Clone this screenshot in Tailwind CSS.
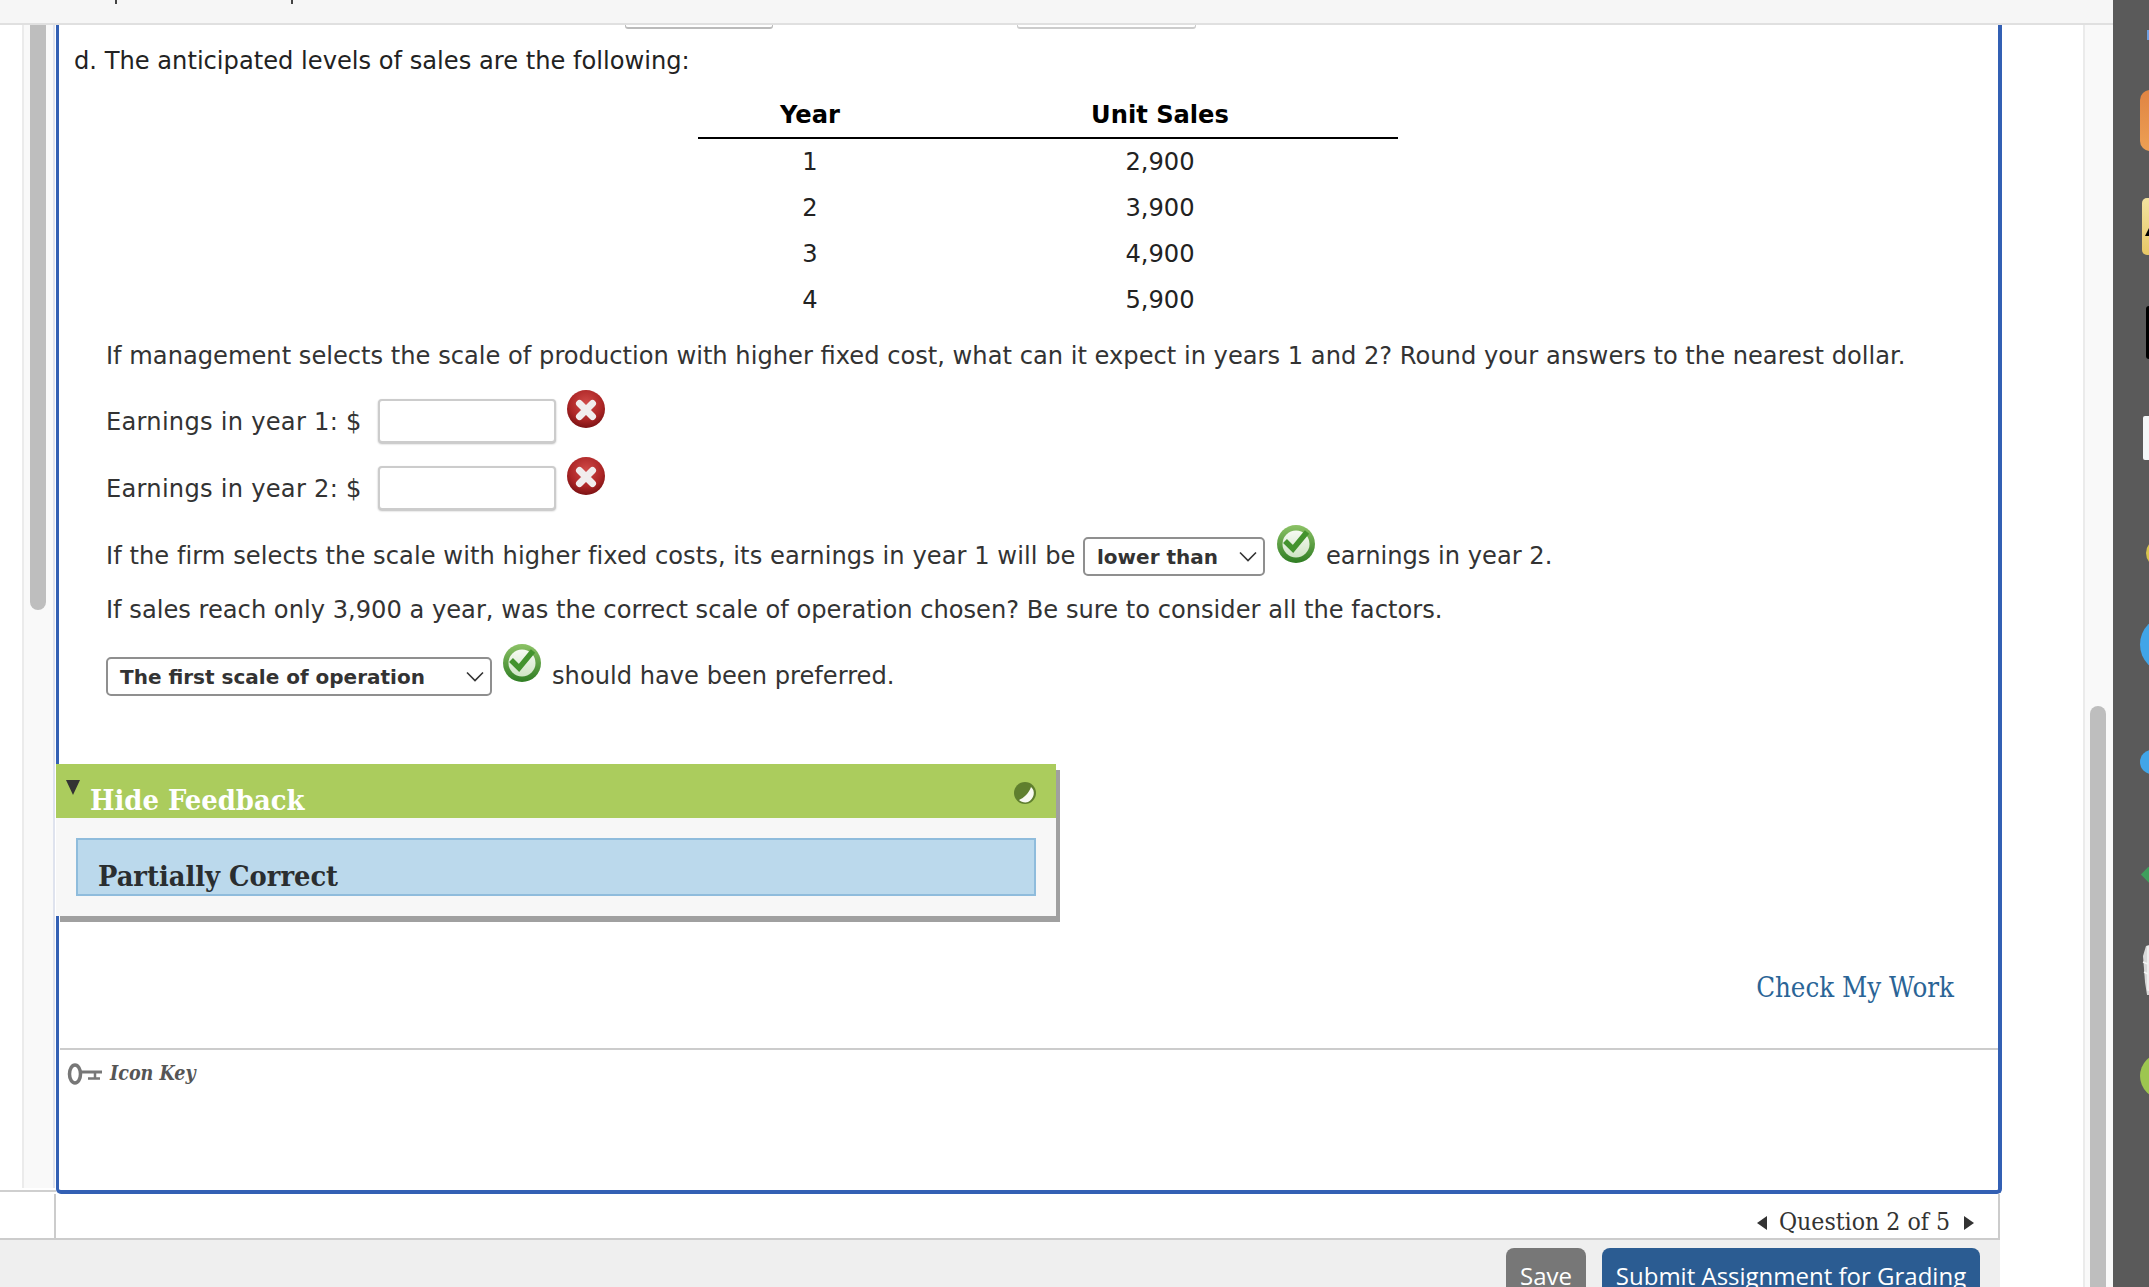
<!DOCTYPE html>
<html lang="en">
<head>
  <meta charset="UTF-8" />
  <title>Question 2 of 5</title>
  <script src="https://cdn.jsdelivr.net/npm/@tailwindcss/browser@4"></script>
</head>
<body class="bg-white overflow-hidden">
<div class="flex w-[2149px] h-[1287px] overflow-hidden font-['DejaVu_Sans',sans-serif] text-[#333]">

  <!-- page area -->
  <div class="w-[2113px] flex flex-col">
    <!-- header strip -->
    <div class="h-[25px] shrink-0 bg-[#f6f6f6] border-b-2 border-[#e0e0e0] flex items-start">
      <div class="ml-[115px] w-[2px] h-[4px] bg-[#444]"></div>
      <div class="ml-[174px] w-[2px] h-[4px] bg-[#444]"></div>
    </div>

    <div class="flex flex-1 min-h-0">
      <div class="w-[2083px] flex flex-col">
        <div class="flex h-[1169px] shrink-0">
          <!-- left scroll pane -->
          <div class="w-[56px] shrink-0 flex flex-col">
            <div class="h-[1163px] ml-[22px] w-[33px] bg-[#f9f9f9] border-l-2 border-r-2 border-l-[#ebebeb] border-r-[#dfe3ee] pl-[6px]">
              <div class="w-[16px] h-[585px] bg-[#bebebe] rounded-b-lg"></div>
            </div>
            <div class="mt-[2px] h-[2px] bg-[#cfcfcf]"></div>
          </div>

          <!-- question box -->
          <div class="w-[1946px] shrink-0 border-l-[3px] border-r-[4px] border-b-[4px] border-[#3360b4] rounded-b-[5px] flex flex-col">
            <div class="h-[4px] flex">
              <div class="ml-[566px] w-[148px] h-[4px] bg-white border-b-2 border-l border-r border-[#bbb] rounded-b-[3px]"></div>
              <div class="ml-[244px] w-[179px] h-[4px] bg-white border-b-2 border-l border-r border-[#ccc] rounded-b-[3px]"></div>
            </div>
            <div class="pl-[15px] text-[24.17px] leading-[32px] mt-[16px] text-[#222]">d. The anticipated levels of sales are the following:</div>

            <table class="ml-[639px] mt-[16px] w-[700px] text-[24.17px] text-center text-black">
              <thead>
                <tr class="border-b-2 border-black h-[45px]">
                  <th class="w-[224px] font-bold">Year</th>
                  <th class="font-bold">Unit Sales</th>
                </tr>
              </thead>
              <tbody class="text-[#222]">
                <tr class="h-[46px]"><td class="pt-[2px]">1</td><td class="pt-[2px]">2,900</td></tr>
                <tr class="h-[46px]"><td class="pt-[2px]">2</td><td class="pt-[2px]">3,900</td></tr>
                <tr class="h-[46px]"><td class="pt-[2px]">3</td><td class="pt-[2px]">4,900</td></tr>
                <tr class="h-[46px]"><td class="pt-[2px]">4</td><td class="pt-[2px]">5,900</td></tr>
              </tbody>
            </table>

            <div class="pl-[47px] text-[24.17px] leading-[32px] text-[#333]">
              <p class="mt-[18px]">If management selects the scale of production with higher fixed cost, what can it expect in years 1 and 2? Round your answers to the nearest dollar.</p>

              <div class="mt-[27px] flex items-start h-[52px]">
                <span class="mt-[7px] w-[272px] shrink-0 tracking-[0.25px]">Earnings in year 1: $</span>
                <div class="w-[178px] h-[44px] bg-white border-2 border-[#ccc] rounded-[4px] shadow-[0_1px_2px_#bbb]"></div>
                <svg class="ml-[11px] -mt-[9px] blur-[0.5px]" width="38" height="38" viewBox="0 0 38 38">
                  <defs><radialGradient id="red1" cx="50%" cy="35%" r="65%"><stop offset="0" stop-color="#d04a48"/><stop offset="0.65" stop-color="#ad2626"/><stop offset="1" stop-color="#7c1214"/></radialGradient></defs>
                  <circle cx="19" cy="19" r="19" fill="url(#red1)"/>
                  <path d="M12.5 13.5 L25.5 26.5 M25.5 13.5 L12.5 26.5" stroke="#f1eded" stroke-width="7" stroke-linecap="round"/>
                </svg>
              </div>

              <div class="mt-[15px] flex items-start h-[52px]">
                <span class="mt-[7px] w-[272px] shrink-0 tracking-[0.25px]">Earnings in year 2: $</span>
                <div class="w-[178px] h-[44px] bg-white border-2 border-[#ccc] rounded-[4px] shadow-[0_1px_2px_#bbb]"></div>
                <svg class="ml-[11px] -mt-[9px] blur-[0.5px]" width="38" height="38" viewBox="0 0 38 38">
                  <circle cx="19" cy="19" r="19" fill="url(#red1)"/>
                  <path d="M12.5 13.5 L25.5 26.5 M25.5 13.5 L12.5 26.5" stroke="#f1eded" stroke-width="7" stroke-linecap="round"/>
                </svg>
              </div>

              <div class="mt-[19px] flex items-start h-[38px]">
                <span class="shrink-0 w-[977px] mt-[3px] whitespace-nowrap tracking-[0.05px]">If the firm selects the scale with higher fixed costs, its earnings in year 1 will be</span>
                <div class="shrink-0 w-[182px] h-[39px] border-2 border-[#8f8f8f] rounded-[5px] bg-white flex items-center justify-between pl-[12px] pr-[6px] text-[20px] font-bold">
                  <span>lower than</span>
                  <svg width="18" height="11" viewBox="0 0 18 11"><path d="M1 1.5 L9 9.5 L17 1.5" fill="none" stroke="#333" stroke-width="1.6"/></svg>
                </div>
                <svg class="ml-[12px] -mt-[12px] shrink-0 blur-[0.4px]" width="38" height="38" viewBox="0 0 38 38">
                  <defs>
                    <linearGradient id="green1" x1="0" y1="0" x2="0" y2="1"><stop offset="0" stop-color="#8cc266"/><stop offset="1" stop-color="#2f7d23"/></linearGradient>
                    <linearGradient id="pale1" x1="0" y1="0" x2="0" y2="1"><stop offset="0" stop-color="#f6faf3"/><stop offset="1" stop-color="#cfe4c4"/></linearGradient>
                  </defs>
                  <circle cx="19" cy="19" r="19" fill="url(#green1)"/>
                  <circle cx="19" cy="19" r="13.5" fill="url(#pale1)"/>
                  <path d="M8 16 L16 24 L30 7" fill="none" stroke="#43932e" stroke-width="5.5"/>
                </svg>
                <span class="ml-[11px] mt-[3px]">earnings in year 2.</span>
              </div>

              <p class="mt-[19px]">If sales reach only 3,900 a year, was the correct scale of operation chosen? Be sure to consider all the factors.</p>

              <div class="mt-[31px] flex items-start h-[38px]">
                <div class="shrink-0 w-[386px] h-[39px] border-2 border-[#8f8f8f] rounded-[5px] bg-white flex items-center justify-between pl-[12px] pr-[6px] text-[20px] font-bold">
                  <span>The first scale of operation</span>
                  <svg width="18" height="11" viewBox="0 0 18 11"><path d="M1 1.5 L9 9.5 L17 1.5" fill="none" stroke="#333" stroke-width="1.6"/></svg>
                </div>
                <svg class="ml-[11px] -mt-[13px] shrink-0 blur-[0.4px]" width="38" height="38" viewBox="0 0 38 38">
                  <circle cx="19" cy="19" r="19" fill="url(#green1)"/>
                  <circle cx="19" cy="19" r="13.5" fill="url(#pale1)"/>
                  <path d="M8 16 L16 24 L30 7" fill="none" stroke="#43932e" stroke-width="5.5"/>
                </svg>
                <span class="ml-[11px] mt-[3px]">should have been preferred.</span>
              </div>
            </div>

            <!-- feedback panel -->
            <div class="mt-[69px] -ml-[3px] w-[1000px] bg-[#f7f7f7] shadow-[4px_6px_0_#a0a0a0] font-['DejaVu_Serif_Condensed','DejaVu_Serif',serif]">
              <div class="h-[54px] bg-[#abcc5d] relative flex items-end pl-[34px]">
                <span class="absolute left-[10px] top-[16px] w-0 h-0 border-l-[7px] border-r-[7px] border-t-[15px] border-l-transparent border-r-transparent border-t-[#333]"></span>
                <span class="text-white font-bold text-[28.8px] leading-[36px]">Hide Feedback</span>
                <svg class="absolute left-[958px] top-[18px] blur-[0.4px]" width="22" height="22" viewBox="0 0 22 22">
                  <circle cx="11" cy="11" r="11" fill="#5f7f2e"/>
                  <path d="M5 18 C10 16 15 11 17 5 C22 9 20 17 14 20 C11 21 7 20 5 18 Z" fill="#f8f9f2"/>
                </svg>
              </div>
              <div class="h-[98px] pt-[20px] px-[20px]">
                <div class="h-[58px] bg-[#bbd9ec] border-2 border-[#8fbcdc] pl-[20px] flex items-end font-bold text-[28.7px] text-[#2a2e30]">
                  <span class="leading-[36px]">Partially Correct</span>
                </div>
              </div>
            </div>

            <div class="mt-[54px] pr-[44px] flex justify-end">
              <span class="font-['DejaVu_Serif_Condensed','DejaVu_Serif',serif] text-[27.4px] leading-[36px] text-[#2a6496]">Check My Work</span>
            </div>

            <div class="mt-[42px] ml-[1px] h-[2px] bg-[#cccccc]"></div>

            <div class="mt-[10px] pl-[7px] flex items-center gap-[8px]">
              <svg class="blur-[0.4px]" width="36" height="24" viewBox="0 0 36 24">
                <ellipse cx="9" cy="12" rx="5.5" ry="9" fill="none" stroke="#777" stroke-width="3.5"/>
                <path d="M14 10 H36" stroke="#777" stroke-width="3"/>
                <path d="M29 10 V16 M22 16.5 H34" stroke="#777" stroke-width="2.5"/>
              </svg>
              <span class="font-['DejaVu_Serif_Condensed','DejaVu_Serif',serif] font-bold italic text-[19.5px] leading-[28px] text-[#555]">Icon Key</span>
            </div>
          </div>
        </div>

        <!-- question nav -->
        <div class="h-[46px] w-[2000px] shrink-0 border-b-2 border-r-2 border-[#cccccc] relative flex items-center justify-end pr-[24px] pt-[13px]">
          <div class="absolute left-[54px] top-0 bottom-0 w-[2px] bg-[#cccccc]"></div>
          <span class="w-0 h-0 border-t-[7px] border-b-[7px] border-r-[10px] border-t-transparent border-b-transparent border-r-[#333] mr-[12px]"></span>
          <span class="font-['DejaVu_Serif_Condensed','DejaVu_Serif',serif] text-[24.6px] text-[#333]">Question 2 of 5</span>
          <span class="w-0 h-0 border-t-[7px] border-b-[7px] border-l-[10px] border-t-transparent border-b-transparent border-l-[#333] ml-[14px]"></span>
        </div>

        <!-- action bar -->
        <div class="flex-1 min-h-0 w-[2000px] bg-[#efefef] flex justify-end pt-[8px] pr-[20px] gap-[16px] font-['Open_Sans',sans-serif] text-[24px] text-white">
          <div class="w-[80px] h-[39px] bg-[#777777] rounded-t-[8px] pt-[17px] leading-[22px] text-center">Save</div>
          <div class="w-[378px] h-[39px] bg-[#2b5c92] rounded-t-[8px] pt-[17px] leading-[22px] text-center">Submit Assignment for Grading</div>
        </div>
      </div>

      <!-- right scroll track -->
      <div class="w-[30px] shrink-0 bg-[#f9f9f9] border-l-2 border-[#ebebeb] pl-[5px] pt-[681px]">
        <div class="w-[16px] h-[700px] bg-[#bebebe] rounded-t-lg"></div>
      </div>
    </div>
  </div>

  <!-- dock, cut off at the window edge -->
  <div class="w-[36px] shrink-0 bg-[#5a5a5a] flex flex-col overflow-hidden">
    <div class="mt-[30px] ml-[34px] w-[3px] h-[10px] shrink-0 bg-[#6e9fe0]"></div>
    <div class="mt-[50px] ml-[27px] w-[40px] h-[61px] shrink-0 rounded-l-[10px] bg-gradient-to-b from-[#e08443] to-[#eda054]"></div>
    <div class="mt-[47px] ml-[29px] w-[40px] h-[57px] shrink-0 rounded-l-[5px] bg-gradient-to-b from-[#f3e3a0] to-[#e8c765] relative">
      <span class="absolute left-[3px] top-[30px] w-0 h-0 border-l-[4px] border-r-[4px] border-b-[8px] border-l-transparent border-r-transparent border-b-black"></span>
    </div>
    <div class="mt-[51px] ml-[33px] w-[40px] h-[53px] shrink-0 rounded-l-[3px] bg-black"></div>
    <div class="mt-[57px] ml-[30px] w-[40px] h-[44px] shrink-0 rounded-l-[2px] bg-[#f4f7f8]"></div>
    <div class="mt-[79px] ml-[33px] w-[40px] h-[28px] shrink-0 rounded-l-full bg-[#d8c44e]"></div>
    <div class="mt-[49px] ml-[27px] w-[57px] h-[57px] shrink-0 rounded-full bg-[#41a5e8]"></div>
    <div class="mt-[77px] ml-[27px] w-[40px] h-[24px] shrink-0 rounded-l-full bg-[#41a5e8]"></div>
    <div class="mt-[88px] ml-[33px] w-[25px] h-[25px] shrink-0 rotate-45 bg-[#3f9e5c]"></div>
    <svg class="mt-[57px] ml-[29px] shrink-0" width="10" height="51" viewBox="0 0 10 51">
      <path d="M1 12 L4 2 L10 0 V51 H5 L3 38 Z" fill="#d9d9d9"/>
      <path d="M6 2 V46 H10 M1 18 L6 20 M2 28 L6 30" fill="none" stroke="#f5f5f5" stroke-width="1.5"/>
      <path d="M8 2 V44" stroke="#444" stroke-width="1"/>
    </svg>
    <div class="mt-[58px] ml-[27px] w-[46px] h-[46px] shrink-0 rounded-full bg-[#9dc650]"></div>
  </div>
</div>
</body>
</html>
